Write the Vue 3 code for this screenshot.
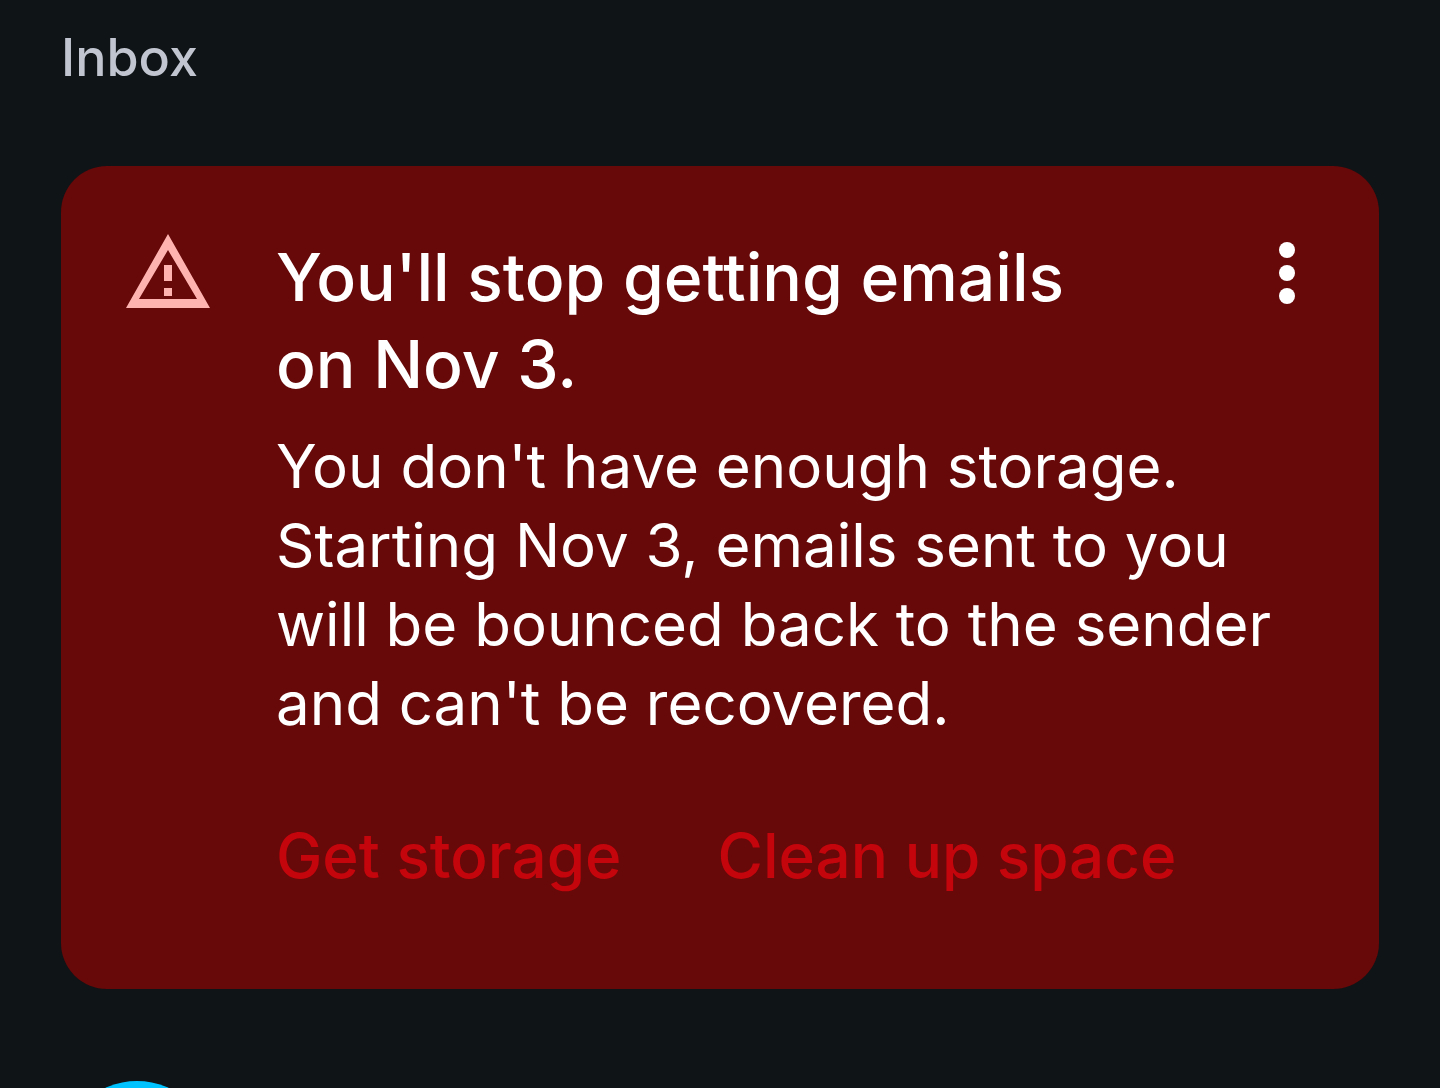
<script setup>
const actions = ['Get storage', 'Clean up space']
</script>

<template>
  <main class="screen">
    <h1 class="section-title">Inbox</h1>

    <section class="alert" aria-labelledby="alert-title">
      <svg class="alert-icon" viewBox="0 0 84 74" aria-hidden="true">
        <path
          fill="currentColor"
          fill-rule="evenodd"
          d="M42 0 84 74H0ZM42 16 13 65H71ZM38 31h8v16h-8ZM38 54h8v8h-8Z"
        />
      </svg>

      <div class="alert-content">
        <h2 id="alert-title" class="alert-title">You'll stop getting emails<br />on Nov 3.</h2>
        <p class="alert-text">
          You don't have enough storage.<br />Starting Nov 3, emails sent to you<br />will be bounced
          back to the sender<br />and can't be recovered.
        </p>
        <div class="actions">
          <button v-for="label in actions" :key="label" type="button" class="action">
            {{ label }}
          </button>
        </div>
      </div>

      <button type="button" class="menu" aria-label="More options">
        <svg class="menu-icon" viewBox="0 0 16 62" aria-hidden="true">
          <circle cx="8" cy="8" r="8" />
          <circle cx="8" cy="31" r="8" />
          <circle cx="8" cy="54" r="8" />
        </svg>
      </button>
    </section>

    <div class="messages">
      <div class="avatar"></div>
    </div>
  </main>
</template>

<style>
body {
  margin: 0;
  background: #0f1416;
}
</style>

<style scoped>
.screen {
  box-sizing: border-box;
  display: flex;
  flex-direction: column;
  height: 100vh;
  padding: 24px 61px 0;
  overflow: hidden;
  background: #0f1416;
  font-family: 'Google Sans', Inter, sans-serif;
}

.section-title {
  flex: none;
  margin: 0 0 74px;
  color: #c0c5d0;
  font-size: 52px;
  font-weight: 500;
  line-height: 68px;
}

.alert {
  position: relative;
  flex: none;
  display: flex;
  align-items: flex-start;
  gap: 66px;
  padding: 68px 65px 77px;
  border-radius: 46px;
  background: #670809;
  color: #fff;
}

.alert-icon {
  flex: none;
  width: 84px;
  height: 74px;
  color: #ffb3b1;
}

.alert-content {
  flex: 1;
  min-width: 0;
  white-space: nowrap;
}

.alert-title {
  margin: 0 0 19px;
  font-size: 66px;
  font-weight: 500;
  line-height: 87px;
}

.alert-text {
  margin: 0 0 57px;
  font-size: 60px;
  line-height: 79px;
}

.actions {
  display: flex;
  gap: 96px;
}

.action {
  padding: 0;
  border: 0;
  background: none;
  color: #c5050c;
  font: inherit;
  font-size: 62px;
  font-weight: 500;
  line-height: 112px;
}

.menu {
  position: absolute;
  top: 76px;
  right: 84px;
  padding: 0;
  border: 0;
  background: none;
  color: inherit;
}

.menu-icon {
  display: block;
  width: 16px;
  height: 62px;
  fill: currentColor;
}

.messages {
  flex: 1;
  min-height: 0;
  padding-top: 92px;
  overflow: hidden;
}

.avatar {
  width: 152px;
  height: 152px;
  border-radius: 50%;
  background: #00c3ff;
}
</style>
